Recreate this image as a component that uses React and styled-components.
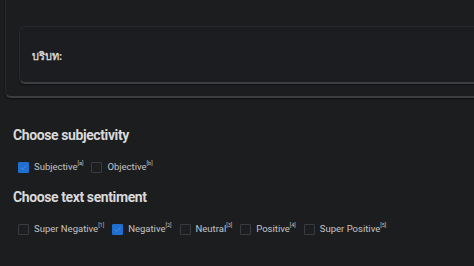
import React from "react";
import styled, { createGlobalStyle } from "styled-components";

const Global = createGlobalStyle`
  html, body { margin: 0; padding: 0; background: #1c1d1f; overflow: hidden; }
  body { font-family: Roboto, "Liberation Sans", sans-serif; }
`;

const Page = styled.div`
  width: 474px;
  height: 266px;
  background: #1c1d1f;
  overflow: hidden;
`;

const OuterCard = styled.div`
  margin-left: 5px;
  width: 500px;
  box-sizing: border-box;
  padding: 26px 0 12px 13px;
  border-left: 1px solid #27292b;
  border-bottom: 2px solid #3b3e41;
  border-bottom-left-radius: 6px;
  box-shadow: 0 1px 2px rgba(0, 0, 0, 0.5);
`;

const InnerCard = styled.div`
  height: 58px;
  box-sizing: border-box;
  display: flex;
  align-items: center;
  padding-left: 12px;
  padding-top: 2px;
  border: 1px solid #27292b;
  border-right: none;
  border-bottom: 2px solid #3c3f42;
  border-radius: 6px 0 0 6px;
  background: #1c1d20;
  box-shadow: 0 1px 2px rgba(0, 0, 0, 0.5);
`;

const ContextLabel = styled.span`
  font-family: "Noto Sans", "DejaVu Sans", sans-serif;
  font-weight: 700;
  font-size: 11px;
  color: #d2d2d2;
`;

const Section = styled.div`
  padding-left: 13px;
  margin-top: ${(p) => p.$top}px;
`;

const Heading = styled.div`
  font-size: 14px;
  font-weight: 700;
  letter-spacing: -0.4px;
  color: #d9d9d9;
  line-height: 16px;
`;

const Options = styled.div`
  display: flex;
  align-items: center;
  gap: 8px;
  margin-top: 18px;
  padding-left: 5px;
`;

const Option = styled.label`
  display: flex;
  align-items: center;
  gap: 5px;
  font-size: 9.5px;
  color: #c4c4c4;
  line-height: 12px;
`;

const Box = styled.span`
  width: 11px;
  height: 11px;
  box-sizing: border-box;
  border-radius: 1px;
  border: 1px solid ${(p) => (p.$checked ? "#1f6fd0" : "#3a3b3e")};
  background: ${(p) => (p.$checked ? "#1f6fd0" : "#1d1e20")};
  display: flex;
  align-items: center;
  justify-content: center;
`;

const Sup = styled.sup`
  font-size: 5.5px;
  vertical-align: top;
  line-height: 7px;
  position: relative;
  top: -1px;
`;

function Check({ label, sup, checked }) {
  return (
    <Option>
      <Box $checked={checked}>
        {checked && (
          <svg width="9" height="9" viewBox="0 0 10 10">
            <path d="M2 5.2 L4.2 7.3 L8 2.8" fill="none" stroke="#4d8ad8" strokeWidth="1.1" />
          </svg>
        )}
      </Box>
      <span>
        {label}
        <Sup>[{sup}]</Sup>
      </span>
    </Option>
  );
}

export default function App() {
  return (
    <Page>
      <Global />
      <OuterCard>
        <InnerCard>
          <ContextLabel>บริบท:</ContextLabel>
        </InnerCard>
      </OuterCard>
      <Section $top={29}>
        <Heading>Choose subjectivity</Heading>
        <Options>
          <Check label="Subjective" sup="a" checked />
          <Check label="Objective" sup="b" />
        </Options>
      </Section>
      <Section $top={16}>
        <Heading>Choose text sentiment</Heading>
        <Options>
          <Check label="Super Negative" sup="1" />
          <Check label="Negative" sup="2" checked />
          <Check label="Neutral" sup="3" />
          <Check label="Positive" sup="4" />
          <Check label="Super Positive" sup="5" />
        </Options>
      </Section>
    </Page>
  );
}
